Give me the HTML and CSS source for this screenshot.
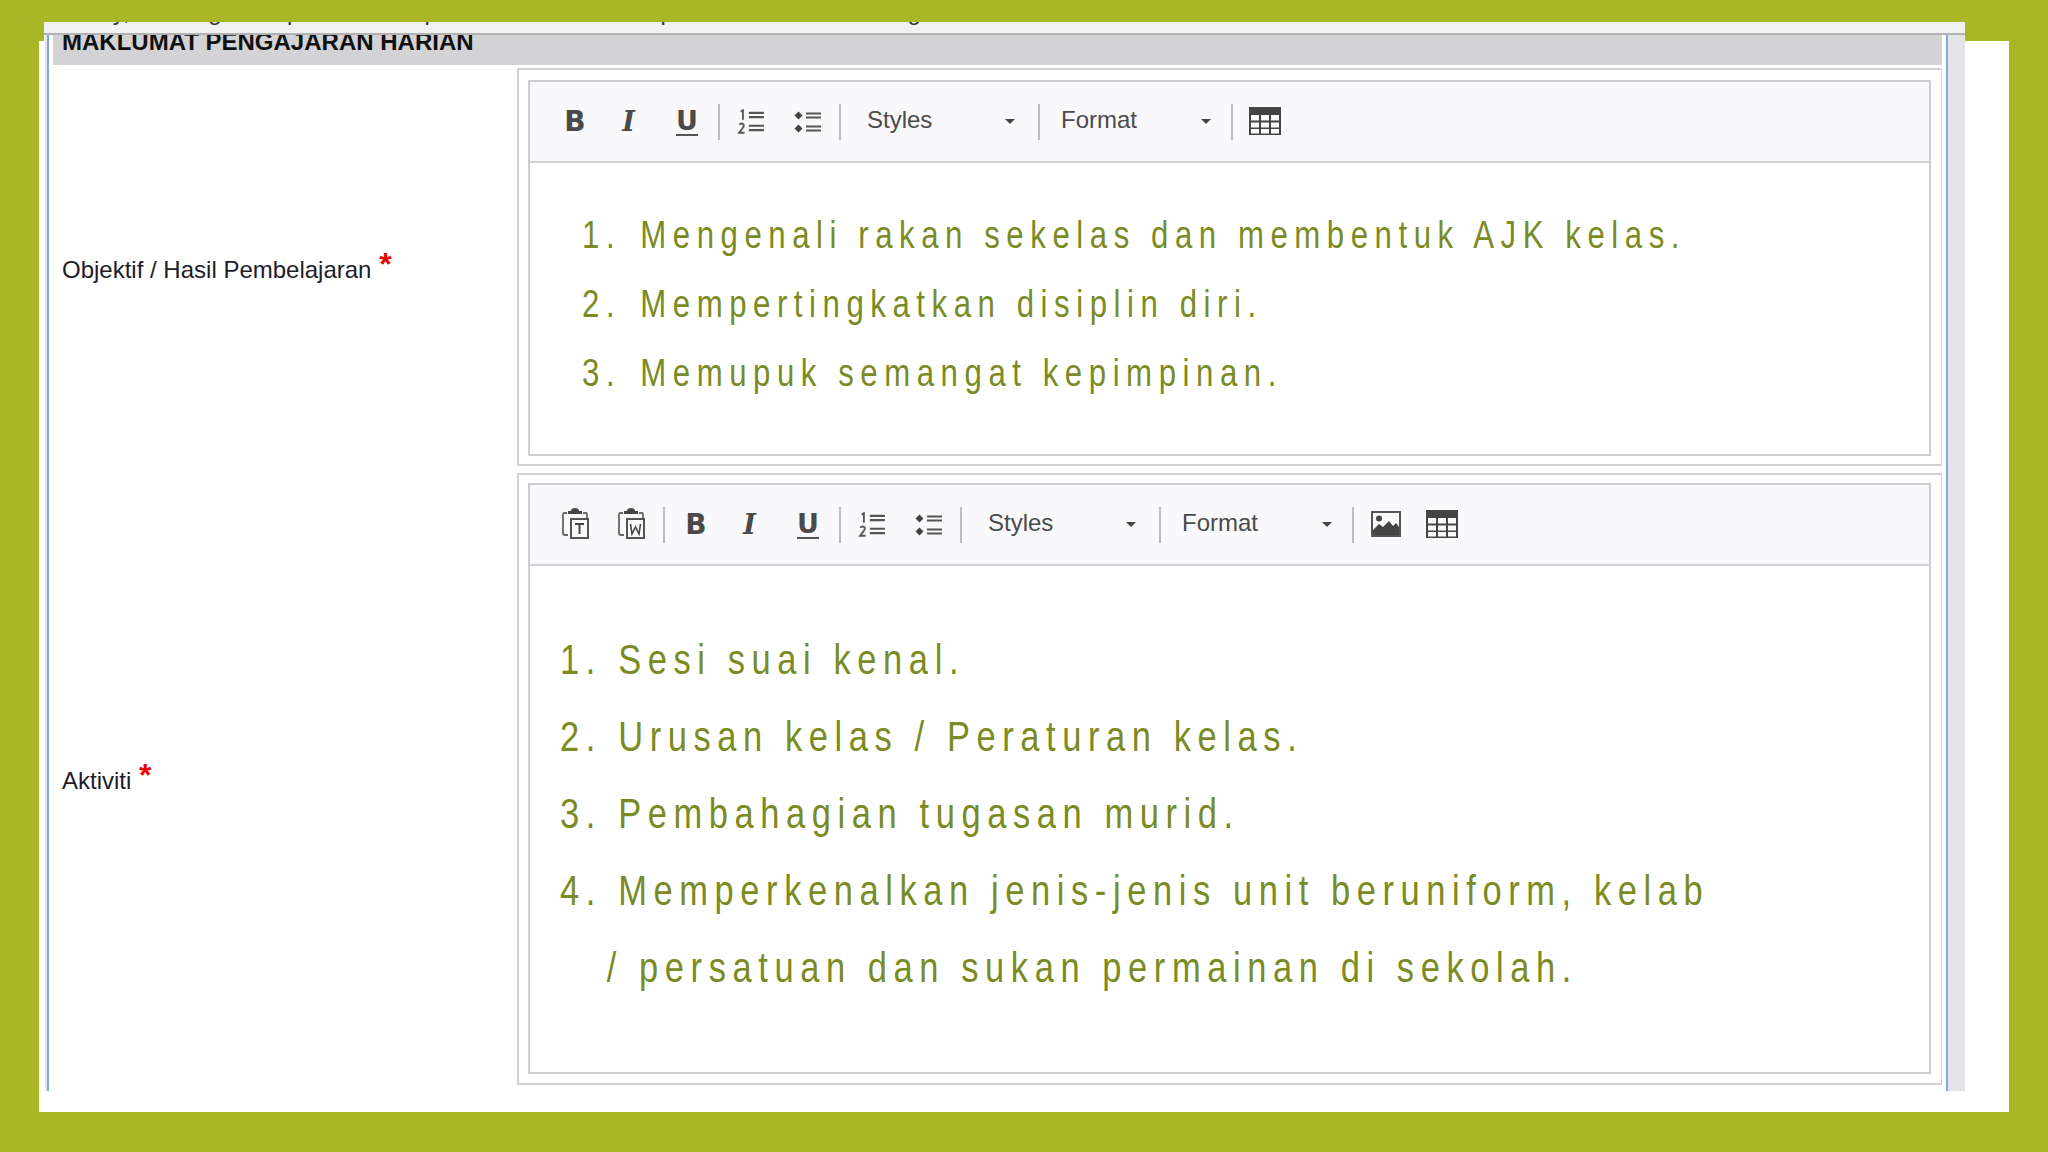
FILE: index.html
```html
<!DOCTYPE html>
<html lang="ms">
<head>
<meta charset="utf-8">
<title>Maklumat Pengajaran Harian</title>
<link rel="stylesheet" href="styles.css">
</head>
<body>
<main class="slide">
  <div class="card">
    <div class="shot">
      <div class="topstrip"><span class="cut">Hari y, ke dengan ke pada hari ini pada kelas murid hari pada hari ini kelas dan guru</span></div>
      <div class="frame">
        <div class="content">
          <h2 class="heading"><span>MAKLUMAT PENGAJARAN HARIAN</span></h2>
          <section class="row row-one">
            <div class="label label-one">Objektif / Hasil Pembelajaran <sup class="req">*</sup></div>
            <div class="cell">
              <div class="editor ed-one">
                <div class="toolbar tb-one">
                  <span class="btn"><span class="g-b">B</span></span>
                  <span class="btn"><span class="g-i">I</span></span>
                  <span class="btn"><span class="g-u">U</span></span>
                  <span class="sep"></span>
                  <span class="btn"><svg class="ico" viewBox="0 0 26 24"><use href="#i-ol"/></svg></span>
                  <span class="btn btn-ul"><svg class="ico" viewBox="0 0 28 24"><use href="#i-ul"/></svg></span>
                  <span class="sep"></span>
                  <span class="drop drop-styles"><span>Styles</span><i class="caret"></i></span>
                  <span class="sep sep-drop"></span>
                  <span class="drop drop-format"><span>Format</span><i class="caret"></i></span>
                  <span class="sep sep-drop"></span>
                  <span class="btn"><svg class="ico-t" viewBox="0 0 32 28"><use href="#i-table"/></svg></span>
                </div>
                <ol class="lines lines-one">
                  <li><span class="num">1.</span><span>Mengenali rakan sekelas dan membentuk AJK kelas.</span></li>
                  <li><span class="num">2.</span><span>Mempertingkatkan disiplin diri.</span></li>
                  <li><span class="num">3.</span><span>Memupuk semangat kepimpinan.</span></li>
                </ol>
              </div>
            </div>
          </section>
          <section class="row row-two">
            <div class="label label-two">Aktiviti <sup class="req">*</sup></div>
            <div class="cell">
              <div class="editor ed-two">
                <div class="toolbar tb-two">
                  <span class="btn"><svg class="ico-c" viewBox="0 0 28 32"><use href="#i-paste-t"/></svg></span>
                  <span class="btn"><svg class="ico-c" viewBox="0 0 28 32"><use href="#i-paste-w"/></svg></span>
                  <span class="sep"></span>
                  <span class="btn"><span class="g-b">B</span></span>
                  <span class="btn"><span class="g-i">I</span></span>
                  <span class="btn"><span class="g-u">U</span></span>
                  <span class="sep"></span>
                  <span class="btn"><svg class="ico" viewBox="0 0 26 24"><use href="#i-ol"/></svg></span>
                  <span class="btn btn-ul"><svg class="ico" viewBox="0 0 28 24"><use href="#i-ul"/></svg></span>
                  <span class="sep"></span>
                  <span class="drop drop-styles"><span>Styles</span><i class="caret"></i></span>
                  <span class="sep sep-drop"></span>
                  <span class="drop drop-format"><span>Format</span><i class="caret"></i></span>
                  <span class="sep sep-drop"></span>
                  <span class="btn"><svg class="ico-t" viewBox="0 0 32 28"><use href="#i-image"/></svg></span>
                  <span class="btn"><svg class="ico-t" viewBox="0 0 32 28"><use href="#i-table"/></svg></span>
                </div>
                <ol class="lines lines-two">
                  <li><span class="num">1.</span><span>Sesi suai kenal.</span></li>
                  <li><span class="num">2.</span><span>Urusan kelas / Peraturan kelas.</span></li>
                  <li><span class="num">3.</span><span>Pembahagian tugasan murid.</span></li>
                  <li><span class="num">4.</span><span>Memperkenalkan jenis-jenis unit beruniform, kelab</span></li>
                  <li class="wrap">/ persatuan dan sukan permainan di sekolah.</li>
                </ol>
              </div>
            </div>
          </section>
        </div>
        <div class="scrollbar"></div>
      </div>
    </div>
  </div>
</main>

<svg class="defs" width="0" height="0" aria-hidden="true">
  <symbol id="i-ol" viewBox="0 0 26 24">
    <path d="M3.5 2.5 L5.5 1 V10 M2 14.5 Q4 12.5 6 14 Q7 16 5 18 L2 22 H7" fill="none" stroke="#555" stroke-width="1.7"/>
    <path d="M11 3.5H25M11 7.5H25M11 15.5H25M11 19.5H25" stroke="#555" stroke-width="2"/>
  </symbol>
  <symbol id="i-ul" viewBox="0 0 28 24">
    <path d="M4.5 1.5 L8.5 5.5 L4.5 9.5 L0.5 5.5Z M4.5 14.5 L8.5 18.5 L4.5 22.5 L0.5 18.5Z" fill="#444"/>
    <path d="M12 3.5H27M12 7.5H27M12 16.5H27M12 20.5H27" stroke="#555" stroke-width="2"/>
  </symbol>
  <symbol id="i-table" viewBox="0 0 32 28">
    <rect x="0" y="0" width="32" height="28" fill="#444"/>
    <g fill="#f9f8fa">
      <rect x="2" y="8" width="8" height="5.5"/><rect x="12" y="8" width="8" height="5.5"/><rect x="22" y="8" width="8" height="5.5"/>
      <rect x="2" y="15.5" width="8" height="5"/><rect x="12" y="15.5" width="8" height="5"/><rect x="22" y="15.5" width="8" height="5"/>
      <rect x="2" y="22" width="8" height="4.5"/><rect x="12" y="22" width="8" height="4.5"/><rect x="22" y="22" width="8" height="4.5"/>
    </g>
  </symbol>
  <symbol id="i-image" viewBox="0 0 32 28">
    <rect x="2" y="2" width="28" height="24" fill="#f9f8fa" stroke="#555" stroke-width="2"/>
    <circle cx="9" cy="8.5" r="3" fill="#444"/>
    <path d="M3 25 V20 L9 14 L13 17 L19 11 L23 16 L26 13 L29 17 V25Z" fill="#444"/>
  </symbol>
  <symbol id="i-paste-t" viewBox="0 0 28 32">
    <path d="M5 6 H2.5 Q1 6 1 8 V26 Q1 28 3 28 H6" fill="none" stroke="#666" stroke-width="1.8"/>
    <path d="M6 7 V4 H9 Q9 1 13 1 Q17 1 17 4 H20 V7Z" fill="#444"/>
    <path d="M21 6 H24 Q25 6 25 8 V11" fill="none" stroke="#666" stroke-width="1.8"/>
    <rect x="9" y="12" width="17" height="19" fill="#f9f8fa" stroke="#555" stroke-width="2"/>
    <path d="M13 17 H22 M17.5 17 V27" stroke="#444" stroke-width="2" fill="none"/>
  </symbol>
  <symbol id="i-paste-w" viewBox="0 0 28 32">
    <path d="M5 6 H2.5 Q1 6 1 8 V26 Q1 28 3 28 H6" fill="none" stroke="#666" stroke-width="1.8"/>
    <path d="M6 7 V4 H9 Q9 1 13 1 Q17 1 17 4 H20 V7Z" fill="#444"/>
    <path d="M21 6 H24 Q25 6 25 8 V11" fill="none" stroke="#666" stroke-width="1.8"/>
    <rect x="9" y="12" width="17" height="19" fill="#f9f8fa" stroke="#555" stroke-width="2"/>
    <path d="M12.5 17 L14 27 L17.5 20 L21 27 L22.5 17" stroke="#444" stroke-width="1.6" fill="none"/>
  </symbol>
</svg>
</body>
</html>
```

FILE: styles.css
```css
* { box-sizing: border-box; }
html, body { margin: 0; padding: 0; }
body {
  width: 2048px;
  height: 1152px;
  overflow: hidden;
  background: #a9b727;
  font-family: "Liberation Sans", Arial, sans-serif;
}
.defs { position: absolute; }
.slide { padding: 41px 39px 40px; height: 1152px; }
.card { background: #fff; height: 1071px; width: 1970px; display: flow-root; }
.shot { margin: -19px 0 0 5px; width: 1921px; }

.topstrip {
  height: 13px;
  background: #f1f1f2;
  overflow: hidden;
  border-bottom: 2px solid #b2b2b2;
}
.cut {
  display: block;
  margin: -23px 0 0 18px;
  font-size: 24px;
  line-height: 26px;
  color: #333;
  white-space: nowrap;
}
.frame {
  display: flex;
  height: 1056px;
  padding-left: 3px;
  background: #fff;
}
.content {
  flex: 1;
  border-left: 2px solid #86a6de;
  border-right: 2px solid #86a6de;
  box-shadow: -2px 0 0 #dde6f6;
  padding: 0 4px;
  min-width: 0;
}
.scrollbar { width: 17px; background: #e4e4e6; }

.heading {
  margin: 0 0 3px;
  height: 30px;
  background: #d3d2d4;
  overflow: hidden;
  font-size: 24px;
  line-height: 26px;
  font-weight: 700;
  color: #111;
  padding-left: 9px;
}
.heading span { display: block; margin-top: -6px; }

.row { display: grid; grid-template-columns: 464px minmax(0, 1fr); }
.row-one { height: 398px; margin-bottom: 7px; }
.row-two { height: 612px; }
.label {
  font-size: 24px;
  color: #1d1d2a;
  padding-left: 9px;
  align-self: center;
}
.label-one { margin-top: 6px; }
.label-two { margin-top: 4px; }
.req { color: #f00000; font-size: 32px; font-weight: 700; line-height: 0; vertical-align: 0.1em; margin-left: 1px; }

.cell {
  min-width: 0;
  border: 2px solid #d3d1d6;
  border-right-width: 1px;
  padding: 10px 10px 8px 9px;
}
.row-two .cell { padding-top: 8px; padding-bottom: 9px; }
.editor {
  height: 100%;
  border: 2px solid #cfcdd2;
  background: #fff;
  display: flex;
  flex-direction: column;
  overflow: hidden;
}
.toolbar {
  height: 81px;
  flex: none;
  background: #f9f8fa;
  border-bottom: 2px solid #d3d1d6;
  display: flex;
  align-items: center;
  padding-left: 17px;
}
.tb-two { padding-left: 18px; }
.btn { width: 56px; height: 36px; display: flex; align-items: center; justify-content: center; flex: none; }
.btn-ul { width: 57px; }
.sep { width: 2px; height: 36px; background: #bdbcc0; margin: 0 3px; flex: none; }
.sep-drop { margin: 0 4px 0 0; }
.g-b, .g-i, .g-u { color: #4a4a4a; line-height: 1; }
.g-b { font: 700 28px "DejaVu Sans", sans-serif; }
.g-i { font: italic 700 27px "DejaVu Serif", serif; margin-right: 5px; }
.g-u { font: 700 27px "DejaVu Sans", sans-serif; border-bottom: 2px solid #555; line-height: 27px; }
.ico { width: 28px; height: 26px; }
.ico-t { width: 32px; height: 28px; margin-bottom: 2px; }
.ico-c { width: 28px; height: 32px; margin-bottom: 3px; }
.drop {
  height: 36px;
  flex: none;
  display: flex;
  align-items: center;
  justify-content: space-between;
  color: #4b4b4b;
  font-size: 24px;
  padding-bottom: 3px;
}
.drop-styles { width: 194px; padding-left: 23px; padding-right: 23px; }
.drop-format { width: 187px; padding-left: 17px; padding-right: 20px; }
.caret {
  width: 0;
  height: 0;
  border-left: 5px solid transparent;
  border-right: 5px solid transparent;
  border-top: 5px solid #444;
  margin-top: 3px;
}

.lines {
  list-style: none;
  padding: 0;
  color: #7a8b24;
  width: max-content;
  transform: scaleX(0.82);
  transform-origin: left top;
}
.lines li { display: flex; white-space: nowrap; }
.lines .num { flex: none; width: 71px; }
.lines-one { margin: 38px 0 0 52px; font-size: 38px; line-height: 69px; letter-spacing: 8px; }
.lines-two { margin: 55px 0 0 30px; font-size: 42px; line-height: 77px; letter-spacing: 8.05px; }
.lines-two .wrap { padding-left: 57px; }
```
